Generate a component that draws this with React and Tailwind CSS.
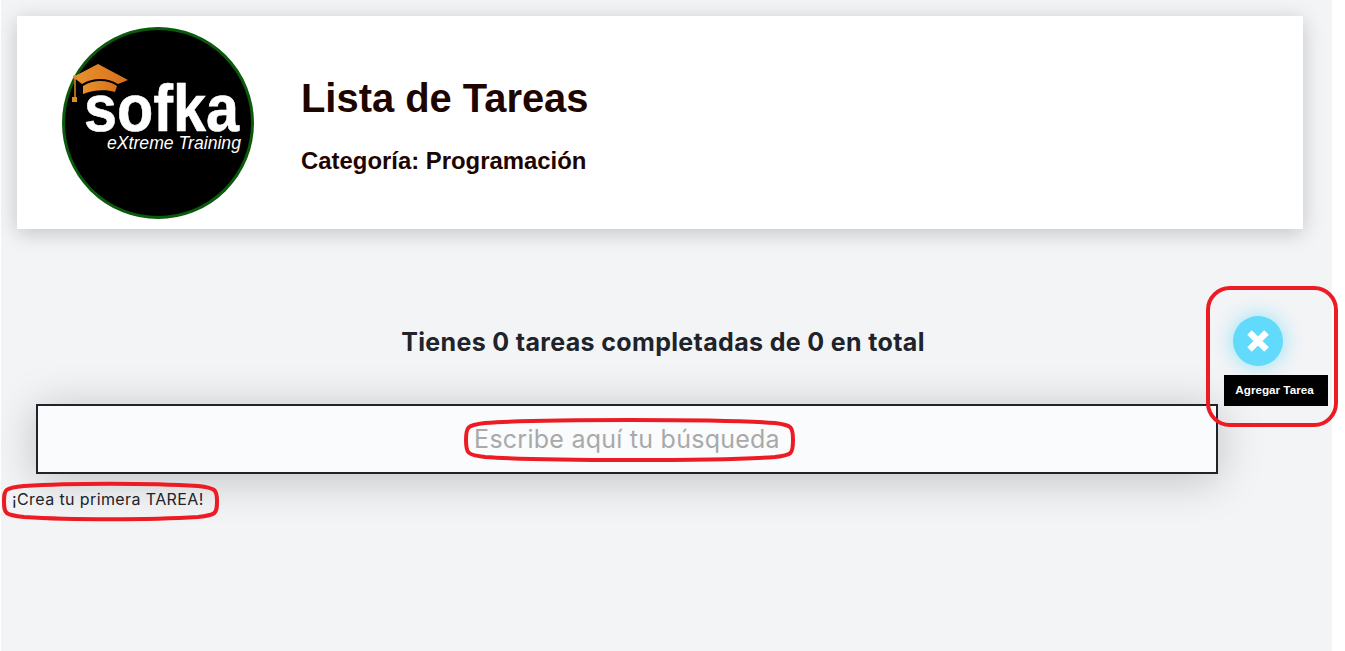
export default function App() {
  return (
    <div className="relative w-[1345px] h-[651px] overflow-hidden bg-white">
      <main className="ml-px w-[1331px] h-[651px] bg-[#f3f4f6] pt-4 font-['Inter',sans-serif]">
        <header className="ml-4 w-[1286px] h-[213px] bg-white shadow-[0_4px_20px_rgba(0,0,0,0.2)] flex items-center pl-[45px] gap-[47px]">
          <Logo />
          <div className="font-['Liberation_Sans',sans-serif] font-bold text-[#1e0500] pt-[4px]">
            <h1 className="text-[39.9px] leading-[46px]">Lista de Tareas</h1>
            <h2 className="mt-[27px] text-[23.9px] leading-[26px]">Categoría: Programación</h2>
          </div>
        </header>
        <h2 className="mt-[98px] mr-[7px] text-center text-[25px] leading-[30px] font-bold tracking-[0.35px] text-[#20232a]">
          Tienes 0 tareas completadas de 0 en total
        </h2>
        <input
          placeholder="Escribe aquí tu búsqueda"
          className="block mt-[47px] ml-[35px] w-[1182px] h-[70px] border-2 border-[#20232a] bg-[#f9fbfd] text-center text-[25px] tracking-[0.25px] shadow-[0_5px_45px_rgba(0,0,0,0.22)] placeholder:text-[#a9a9a9]"
        />
        <p className="mt-[15px] ml-[11px] text-[16px] leading-5 tracking-[0.4px] text-[#20232a]">¡Crea tu primera TAREA!</p>
      </main>

      <div className="absolute left-[1224px] top-[316px] w-[104px] flex flex-col items-center">
        <button className="mr-[36px] w-[50px] h-[50px] rounded-full bg-[#61dafb] shadow-[0_0_20px_rgba(97,218,251,0.7)] flex items-center justify-center">
          <svg width="24" height="24" viewBox="0 0 24 24">
            <path d="M3.5 3.5 L20.5 20.5 M20.5 3.5 L3.5 20.5" stroke="#fff" strokeWidth="6.5" />
          </svg>
        </button>
        <div className="mt-[9px] pr-[3px] pb-[2px] w-[104px] h-[31px] bg-black text-white flex items-center justify-center text-[11.7px] font-bold font-['Liberation_Sans',sans-serif]">
          Agregar Tarea
        </div>
      </div>

      <svg className="absolute inset-0 pointer-events-none" width="1345" height="651" fill="none" stroke="#ed1c24" strokeWidth="4">
        <rect x="1208" y="288" width="128" height="137" rx="22" />
        <path d="M466 440 C466 427 467 425 485 423 C540 419 720 419 775 423 C792 425 793 427 793 440 C793 454 792 455 775 457 C720 461 540 461 485 457 C467 455 466 453 466 440 Z" />
        <path d="M4 501 C4 489 5 488 24 486 C70 483 150 483 198 486 C216 488 217 490 217 501 C217 514 216 515 198 517 C150 520 70 520 24 517 C5 515 4 514 4 501 Z" />
      </svg>
    </div>
  );
}

function Logo() {
  return (
    <svg width="192" height="192" viewBox="0 0 192 192" className="shrink-0">
      <defs>
        <linearGradient id="cap" x1="0" x2="1" y1="0" y2="0">
          <stop offset="0" stopColor="#e8922e" />
          <stop offset="1" stopColor="#d8701a" />
        </linearGradient>
      </defs>
      <circle cx="96" cy="96" r="94.5" fill="#000" stroke="#0b5a0b" strokeWidth="3" />
      <path d="M11 50 L36 37 L66 53 L56 57 C45 50 30 51 20 57 Z" fill="url(#cap)" />
      <path d="M21 59 C31 53 45 52 55 59 L53 65 C44 62 30 63 21 67 Z" fill="url(#cap)" />
      <path d="M13 50 V70" stroke="#e08a20" strokeWidth="1.5" />
      <rect x="10" y="70" width="5" height="5" fill="#e08a20" />
      <circle cx="13" cy="50" r="2" fill="#e08a20" />
      <text x="22" y="104" fontFamily="'Liberation Sans',sans-serif" fontWeight="700" fontSize="66" fill="#fff" stroke="#fff" strokeWidth="0.6" textLength="155" lengthAdjust="spacingAndGlyphs">sofka</text>
      <text x="45" y="122" fontFamily="'Liberation Sans',sans-serif" fontStyle="italic" fontSize="17.5" fill="#fff" textLength="134" lengthAdjust="spacingAndGlyphs">eXtreme Training</text>
    </svg>
  );
}
